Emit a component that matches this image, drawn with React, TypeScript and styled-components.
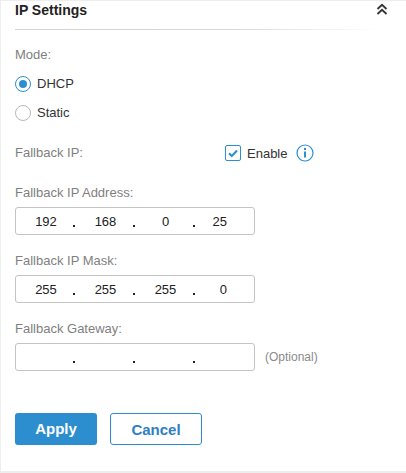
import React from "react";
import styled, { createGlobalStyle } from "styled-components";

const Global = createGlobalStyle`
  html, body { margin: 0; padding: 0; background: #fff; }
  body { font-family: "Liberation Sans", Arial, sans-serif; font-size: 13px; }
  * { box-sizing: border-box; }
`;

const Panel = styled.div`
  width: 406px;
  height: 473px;
  background: #fff;
  border-top: 1px solid #eee;
  border-left: 1px solid #eee;
  border-bottom: 2px solid #eee;
  padding-left: 14px;
  overflow: hidden;
  display: flex;
  flex-direction: column;
`;

const Header = styled.div`
  height: 28px;
  width: 376px;
  display: flex;
  align-items: center;
  justify-content: space-between;
  padding-bottom: 10px;
  padding-right: 2px;
`;

const Title = styled.div`
  font-size: 14px;
  font-weight: 700;
  color: #222;
`;

const Chevrons = styled.svg`
  margin-top: -2px;
`;

const Rule = styled.div`
  width: 364px;
  height: 1px;
  background: linear-gradient(to right, #d4d4d4 0%, #d8d8d8 60%, #ffffff 100%);
`;

const Label = styled.div<{ $top: number }>`
  margin-top: ${(p) => p.$top}px;
  height: 16px;
  line-height: 16px;
  font-size: 13px;
  color: #7f7f7f;
`;

const RadioRow = styled.label<{ $top: number }>`
  margin-top: ${(p) => p.$top}px;
  display: flex;
  align-items: center;
  gap: 6px;
  height: 16px;
  color: #333;
  font-size: 13px;
  line-height: 16px;
`;

const RadioMark = styled.span<{ $on?: boolean }>`
  width: 16px;
  height: 16px;
  border-radius: 50%;
  border: 1px solid ${(p) => (p.$on ? "#2d8fd0" : "#b9b9b9")};
  display: flex;
  align-items: center;
  justify-content: center;
  &::after {
    content: "";
    width: 8px;
    height: 8px;
    border-radius: 50%;
    background: ${(p) => (p.$on ? "#2d8fd0" : "transparent")};
  }
`;

const FallbackRow = styled.div`
  margin-top: 23px;
  height: 18px;
  display: flex;
  align-items: center;
`;

const FallbackLabel = styled.div`
  width: 210px;
  color: #7f7f7f;
  font-size: 13px;
  padding-bottom: 2px;
`;

const Check = styled.span`
  width: 16px;
  height: 16px;
  border: 1px solid #2d8fd0;
  border-radius: 2px;
  display: flex;
  align-items: center;
  justify-content: center;
  margin-right: 6px;
`;

const EnableText = styled.span`
  color: #333;
  font-size: 13px;
  margin-right: 9px;
`;

const IpRow = styled.div`
  margin-top: 6px;
  display: flex;
  align-items: center;
  gap: 10px;
`;

const IpBox = styled.div`
  width: 240px;
  height: 28px;
  border: 1px solid #c4c4c4;
  border-radius: 3px;
  display: grid;
  grid-template-columns: 59px 60px 60px 59px;
  color: #222;
  font-size: 13px;
`;

const Octet = styled.div`
  position: relative;
  display: flex;
  align-items: center;
  justify-content: center;
  line-height: 26px;
  padding: 1px 0 0 1px;
  &:last-child {
    justify-content: flex-end;
    padding-right: 27px;
  }
  &:not(:last-child)::after {
    content: "";
    position: absolute;
    right: 0;
    top: 17px;
    width: 2px;
    height: 2px;
    background: #222;
  }
`;

const Optional = styled.span`
  color: #8a8a8a;
  font-size: 12px;
`;

const Buttons = styled.div`
  margin-top: 42px;
  display: flex;
  gap: 13px;
`;

const Apply = styled.button`
  width: 82px;
  height: 32px;
  border: none;
  border-radius: 3px;
  background: #2d8ecf;
  color: #fff;
  font: 700 15px "Liberation Sans", Arial, sans-serif;
  padding: 0 0 2px;
`;

const Cancel = styled.button`
  width: 92px;
  height: 32px;
  border: 1px solid #2d8ecf;
  border-radius: 3px;
  background: #fff;
  color: #2d80c4;
  font: 700 15px "Liberation Sans", Arial, sans-serif;
  padding: 0;
`;

const IpField = ({ values }: { values: string[] }) => (
  <IpBox>
    {values.map((v, i) => (
      <Octet key={i}>{v}</Octet>
    ))}
  </IpBox>
);

export default function App() {
  return (
    <Panel>
      <Global />
      <Header>
        <Title>IP Settings</Title>
        <Chevrons width="14" height="14" viewBox="0 0 14 14" fill="none" stroke="#333" strokeWidth="1.8">
          <path d="M2.5 7 7 2.8 11.5 7" />
          <path d="M2.5 12 7 7.8 11.5 12" />
        </Chevrons>
      </Header>
      <Rule />
      <Label $top={17}>Mode:</Label>
      <RadioRow $top={13}>
        <RadioMark $on />
        DHCP
      </RadioRow>
      <RadioRow $top={13}>
        <RadioMark />
        Static
      </RadioRow>
      <FallbackRow>
        <FallbackLabel>Fallback IP:</FallbackLabel>
        <Check>
          <svg width="12" height="12" viewBox="0 0 12 12" fill="none" stroke="#2d8fd0" strokeWidth="2">
            <path d="M2 6.2 4.8 9 10 3.5" />
          </svg>
        </Check>
        <EnableText>Enable</EnableText>
        <svg width="18" height="18" viewBox="0 0 18 18" fill="none" stroke="#2d8fd0">
          <circle cx="9" cy="9" r="8" strokeWidth="1.2" />
          <path d="M9 7.5v6" strokeWidth="2" />
          <path d="M9 4v2" strokeWidth="2" />
        </svg>
      </FallbackRow>
      <Label $top={23}>Fallback IP Address:</Label>
      <IpRow>
        <IpField values={["192", "168", "0", "25"]} />
      </IpRow>
      <Label $top={18}>Fallback IP Mask:</Label>
      <IpRow>
        <IpField values={["255", "255", "255", "0"]} />
      </IpRow>
      <Label $top={18}>Fallback Gateway:</Label>
      <IpRow>
        <IpField values={["", "", "", ""]} />
        <Optional>(Optional)</Optional>
      </IpRow>
      <Buttons>
        <Apply>Apply</Apply>
        <Cancel>Cancel</Cancel>
      </Buttons>
    </Panel>
  );
}
